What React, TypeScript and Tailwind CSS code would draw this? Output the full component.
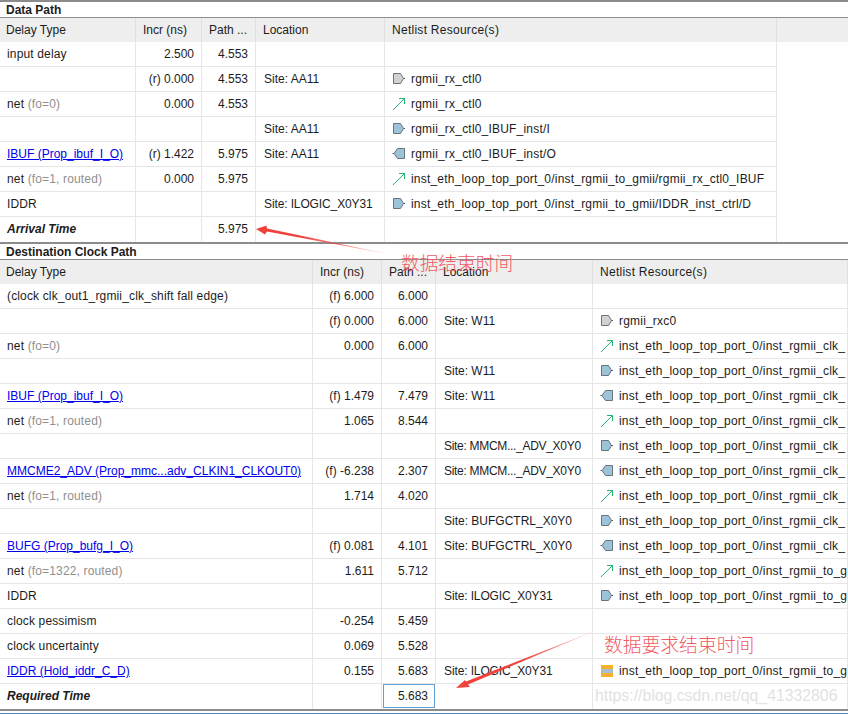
import type { ReactNode } from 'react';

type Icon = 'port' | 'in' | 'out' | 'net' | 'ff' | null;

type RowData = {
  type?: ReactNode;
  incr?: string;
  path?: string;
  loc?: ReactNode;
  icon?: Icon;
  res?: string;
  selected?: boolean;
};

const LINE = 'border-r border-b border-[#e6e6e6]';
const LAST_LINE = 'border-r border-[#e6e6e6] pb-[1px]';

function CellIcon({ kind }: { kind: Icon }) {
  if (kind === 'net') {
    return (
      <svg width="14" height="14" viewBox="0 0 14 14" className="shrink-0">
        <path d="M1 13 L12.5 1.5 M7 1.5 H12.5 V7" fill="none" stroke="#22b573" strokeWidth="1" />
      </svg>
    );
  }
  if (kind === 'ff') {
    return (
      <svg width="14" height="14" viewBox="0 0 14 14" className="shrink-0">
        <rect x="1" y="1" width="12" height="4" fill="#f5b02e" />
        <rect x="1" y="5" width="12" height="4" fill="#a9bfcc" />
        <rect x="1" y="9" width="12" height="4" fill="#f5b02e" />
      </svg>
    );
  }
  if (kind === 'out') {
    return (
      <svg width="14" height="14" viewBox="0 0 14 14" className="shrink-0">
        <path d="M0.5 6.5 H2" stroke="#555" />
        <path d="M12.5 1.5 V11.5 H5.5 L2 6.5 L5.5 1.5 Z" fill="#9cc3d8" stroke="#66757f" />
      </svg>
    );
  }
  const fill = kind === 'port' ? '#d2d2d2' : '#9cc3d8';
  return (
    <svg width="14" height="14" viewBox="0 0 14 14" className="shrink-0">
      <path d="M1.5 1.5 V11.5 H8.5 L11.5 6.5 L8.5 1.5 Z" fill={fill} stroke="#66757f" />
      <path d="M11.5 6.5 H13" stroke="#555" />
    </svg>
  );
}

function Table({ cols, head, rows }: { cols: string; head: string[]; rows: RowData[] }) {
  return (
    <div>
      <div className={`grid ${cols} h-[24px] bg-[#eeeeee]`}>
        {head.map((h, i) => (
          <div
            key={i}
            className={`flex items-center overflow-hidden whitespace-nowrap ${i === 0 ? 'pl-[6px]' : 'pl-[7px]'} ${h === 'Netlist Resource(s)' ? 'tracking-[0.27px]' : ''} ${h || i < 5 ? 'border-r border-[#e0e0e0]' : ''}`}
          >
            {h}
          </div>
        ))}
      </div>
      {rows.map((r, i) => {
        const line = i === rows.length - 1 ? LAST_LINE : LINE;
        return (
          <div key={i} className={`grid ${cols} h-[25px]`}>
            <div className={`${line} flex items-center pl-[7px] overflow-hidden whitespace-nowrap tracking-[0.15px]`}>{r.type}</div>
            <div className={`${line} flex items-center justify-end pr-[7px] whitespace-nowrap`}>{r.incr}</div>
            {r.selected ? (
              <div className="flex items-center justify-end pr-[6px] mx-[1px] h-[24px] border border-[#5f9fd4]">{r.path}</div>
            ) : (
              <div className={`${line} flex items-center justify-end pr-[7px]`}>{r.path}</div>
            )}
            <div className={`${line} flex items-center pl-[8px] overflow-hidden whitespace-nowrap`}>{r.loc}</div>
            <div className={`${line} flex items-center pl-[7px] gap-[5px] overflow-hidden whitespace-nowrap`}>
              {r.icon && <CellIcon kind={r.icon} />}
              <span className="tracking-[0.2px]">{r.res}</span>
            </div>
            {head.length > 5 && <div />}
          </div>
        );
      })}
    </div>
  );
}

const Link = ({ children }: { children: ReactNode }) => (
  <a href="#" className="text-[#0000ee] underline tracking-normal">{children}</a>
);

const Net = ({ note }: { note: string }) => (
  <span>net <span className="text-[#8f8f8f]">({note})</span></span>
);

const Bold = ({ children }: { children: ReactNode }) => (
  <span className="font-bold italic tracking-normal">{children}</span>
);

const dataRows: RowData[] = [
  { type: 'input delay', incr: '2.500', path: '4.553' },
  { incr: '(r) 0.000', path: '4.553', loc: 'Site: AA11', icon: 'port', res: 'rgmii_rx_ctl0' },
  { type: <Net note="fo=0" />, incr: '0.000', path: '4.553', icon: 'net', res: 'rgmii_rx_ctl0' },
  { loc: 'Site: AA11', icon: 'in', res: 'rgmii_rx_ctl0_IBUF_inst/I' },
  { type: <Link>IBUF (Prop_ibuf_I_O)</Link>, incr: '(r) 1.422', path: '5.975', loc: 'Site: AA11', icon: 'out', res: 'rgmii_rx_ctl0_IBUF_inst/O' },
  { type: <Net note="fo=1, routed" />, incr: '0.000', path: '5.975', icon: 'net', res: 'inst_eth_loop_top_port_0/inst_rgmii_to_gmii/rgmii_rx_ctl0_IBUF' },
  { type: 'IDDR', loc: <span className="tracking-[-0.12px]">Site: ILOGIC_X0Y31</span>, icon: 'in', res: 'inst_eth_loop_top_port_0/inst_rgmii_to_gmii/IDDR_inst_ctrl/D' },
  { type: <Bold>Arrival Time</Bold>, path: '5.975' },
];

// the reference cuts these off at the window edge
const clk = 'inst_eth_loop_top_port_0/inst_rgmii_clk_';
const gmii = 'inst_eth_loop_top_port_0/inst_rgmii_to_g';
const mmcm = <span className="tracking-[-0.3px]">Site: MMCM..._ADV_X0Y0</span>;
const ilogic = <span className="tracking-[-0.12px]">Site: ILOGIC_X0Y31</span>;

const clockRows: RowData[] = [
  { type: '(clock clk_out1_rgmii_clk_shift fall edge)', incr: '(f) 6.000', path: '6.000' },
  { incr: '(f) 0.000', path: '6.000', loc: 'Site: W11', icon: 'port', res: 'rgmii_rxc0' },
  { type: <Net note="fo=0" />, incr: '0.000', path: '6.000', icon: 'net', res: clk },
  { loc: 'Site: W11', icon: 'in', res: clk },
  { type: <Link>IBUF (Prop_ibuf_I_O)</Link>, incr: '(f) 1.479', path: '7.479', loc: 'Site: W11', icon: 'out', res: clk },
  { type: <Net note="fo=1, routed" />, incr: '1.065', path: '8.544', icon: 'net', res: clk },
  { loc: mmcm, icon: 'in', res: clk },
  { type: <Link>MMCME2_ADV (Prop_mmc...adv_CLKIN1_CLKOUT0)</Link>, incr: '(f) -6.238', path: '2.307', loc: mmcm, icon: 'out', res: clk },
  { type: <Net note="fo=1, routed" />, incr: '1.714', path: '4.020', icon: 'net', res: clk },
  { loc: 'Site: BUFGCTRL_X0Y0', icon: 'in', res: clk },
  { type: <Link>BUFG (Prop_bufg_I_O)</Link>, incr: '(f) 0.081', path: '4.101', loc: 'Site: BUFGCTRL_X0Y0', icon: 'out', res: clk },
  { type: <Net note="fo=1322, routed" />, incr: '1.611', path: '5.712', icon: 'net', res: gmii },
  { type: 'IDDR', loc: ilogic, icon: 'in', res: gmii },
  { type: 'clock pessimism', incr: '-0.254', path: '5.459' },
  { type: 'clock uncertainty', incr: '0.069', path: '5.528' },
  { type: <Link>IDDR (Hold_iddr_C_D)</Link>, incr: '0.155', path: '5.683', loc: ilogic, icon: 'ff', res: gmii },
  { type: <Bold>Required Time</Bold>, path: '5.683', selected: true },
];

export default function App() {
  return (
    <div className="relative w-[848px] h-[714px] overflow-hidden bg-white text-[12px] text-[#1c1c1c] font-['Liberation_Sans','Noto_Sans_CJK_SC',sans-serif]">
      <div className="border-t-2 border-[#8c8c8c]">
        <div className="h-[15px] pl-[6px] flex items-center font-bold border-b border-[#8c8c8c] box-content">Data Path</div>
        <Table
          cols="grid-cols-[136px_66px_54px_129px_392px_1fr]"
          head={['Delay Type', 'Incr (ns)', 'Path ...', 'Location', 'Netlist Resource(s)', '']}
          rows={dataRows}
        />
      </div>
      <div className="border-t-2 border-[#8c8c8c]">
        <div className="h-[15px] pl-[6px] flex items-center font-bold border-b border-[#8c8c8c] box-content">Destination Clock Path</div>
        <Table
          cols="grid-cols-[313px_69px_54px_157px_1fr]"
          head={['Delay Type', 'Incr (ns)', 'Path ...', 'Location', 'Netlist Resource(s)']}
          rows={clockRows}
        />
      </div>
      <div className="h-[2px] bg-[#8c8c8c]" />
      <div className="h-[1px] mt-[2px] bg-[#4a86c0]" />

      {/* annotations pasted over the table */}
      <svg width="848" height="714" className="absolute left-0 top-0 pointer-events-none">
        <defs>
          <linearGradient id="fadeA" gradientUnits="userSpaceOnUse" x1="393" y1="255" x2="300" y2="236">
            <stop offset="0" stopColor="#f0423c" stopOpacity="0.15" />
            <stop offset="1" stopColor="#f0423c" />
          </linearGradient>
          <linearGradient id="fadeB" gradientUnits="userSpaceOnUse" x1="597" y1="630" x2="520" y2="660">
            <stop offset="0" stopColor="#f0423c" stopOpacity="0.15" />
            <stop offset="1" stopColor="#f0423c" />
          </linearGradient>
        </defs>
        <path d="M393 255 L267 228.5 L266.5 225.5 L256 229 L265 234.5 L267 231.5 Z" fill="url(#fadeA)" />
        <path d="M597 630 L466 681.5 L465 680 L456 688 L470 687 L468 684.5 Z" fill="url(#fadeB)" />
      </svg>
      <div className="absolute left-[401px] top-[250px] text-[18.7px] leading-[24px] text-[#f25a62] font-['Noto_Sans_CJK_SC',sans-serif] font-light whitespace-nowrap">数据结束时间</div>
      <div className="absolute left-[604px] top-[632px] text-[18.8px] leading-[24px] text-[#f25a62] font-['Noto_Sans_CJK_SC',sans-serif] font-light whitespace-nowrap">数据要求结束时间</div>
      <div className="absolute left-[595px] top-[686px] text-[15.8px] leading-[20px] text-[#e2e2e2] whitespace-nowrap">https://blog.csdn.net/qq_41332806</div>
    </div>
  );
}
